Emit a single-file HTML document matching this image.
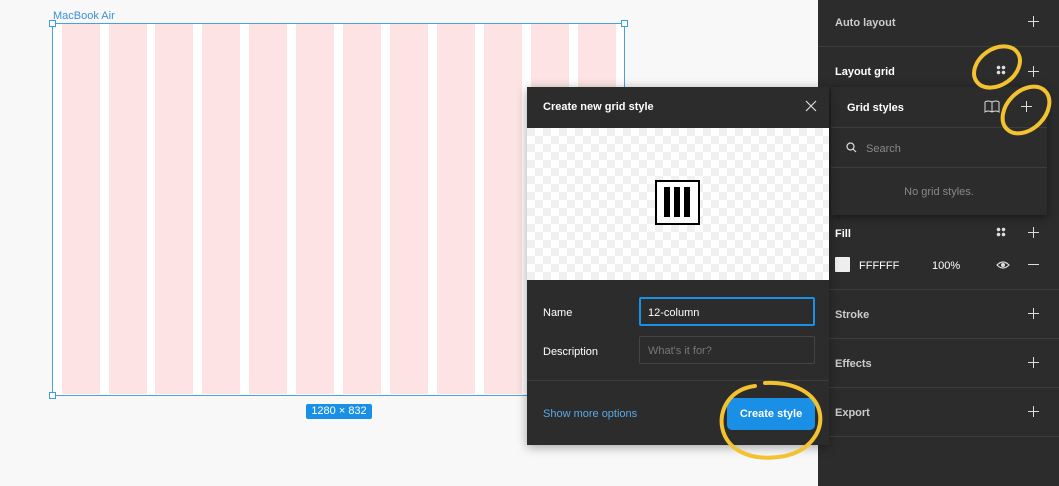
<!DOCTYPE html>
<html><head><meta charset="utf-8"><style>
*{margin:0;padding:0;box-sizing:border-box}
body{width:1059px;height:486px;overflow:hidden;background:#f8f8f8;font-family:"Liberation Sans",sans-serif;position:relative}
.abs{position:absolute}
.col{position:absolute;top:24px;height:370px;width:38px;background:#fde3e3}
.h{position:absolute;width:7px;height:7px;background:#fff;border:1px solid #3a9be6}
.panel{left:818px;top:0;width:241px;height:486px;background:#2c2c2c}
.lbl{position:absolute;left:17px;font-size:11px;font-weight:bold;color:#fff}
.div{position:absolute;left:0;width:241px;height:1px;background:#3d3d3d}
.plus{position:absolute;width:11px;height:11px}
.plus:before{content:"";position:absolute;left:5px;top:0;width:1px;height:11px;background:#ddd}
.plus:after{content:"";position:absolute;top:5px;left:0;height:1px;width:11px;background:#ddd}
.dots{position:absolute;width:10px;height:10px;background:radial-gradient(circle,#ddd 1.6px,transparent 2px) 0 0/5px 5px}
.checker{background-color:#fff;background-image:linear-gradient(45deg,#f0f0f0 25%,transparent 25%,transparent 75%,#f0f0f0 75%),linear-gradient(45deg,#f0f0f0 25%,transparent 25%,transparent 75%,#f0f0f0 75%);background-size:16px 16px;background-position:8px 0,0 8px}
</style></head><body>
<div class="abs" style="left:53px;top:10px;font-size:11px;color:#3a8fd8">MacBook Air</div>
<div class="abs" style="left:52px;top:23px;width:573px;height:373px;background:#fff;border:1px solid #4aa0e6"></div>
<div class="col" style="left:62px"></div><div class="col" style="left:109px"></div><div class="col" style="left:155px"></div><div class="col" style="left:202px"></div><div class="col" style="left:249px"></div><div class="col" style="left:296px"></div><div class="col" style="left:343px"></div><div class="col" style="left:390px"></div><div class="col" style="left:437px"></div><div class="col" style="left:484px"></div><div class="col" style="left:531px"></div><div class="col" style="left:578px"></div>
<div class="h" style="left:49px;top:20px"></div><div class="h" style="left:621px;top:20px"></div><div class="h" style="left:49px;top:392px"></div>
<div class="abs" style="left:306px;top:404px;width:66px;height:15px;background:#1a8fe6;border-radius:2px;color:#fff;font-size:11px;text-align:center;line-height:15px">1280 × 832</div>

<div class="abs panel">
 <div class="lbl" style="top:17px;color:#ccc">Auto layout</div><div class="plus" style="left:210px;top:16px"></div>
 <div class="div" style="top:46px"></div>
 <div class="lbl" style="top:66px">Layout grid</div><div class="dots" style="left:178px;top:65px"></div><div class="plus" style="left:210px;top:66px"></div>
 <div class="lbl" style="top:228px">Fill</div><div class="dots" style="left:178px;top:227px"></div><div class="plus" style="left:210px;top:227px"></div>
 <div class="abs" style="left:17px;top:257px;width:15px;height:15px;background:#eee;border-radius:1px"></div>
 <div class="abs" style="left:41px;top:260px;font-size:11px;color:#fff">FFFFFF</div>
 <div class="abs" style="left:114px;top:260px;font-size:11px;color:#fff">100%</div>
 <svg class="abs" style="left:178px;top:260px" width="14" height="10"><path d="M1 5Q7 -1 13 5Q7 11 1 5Z" fill="none" stroke="#ddd" stroke-width="1.2"/><circle cx="7" cy="5" r="2" fill="#ddd"/></svg>
 <div class="abs" style="left:210px;top:264px;width:11px;height:1px;background:#ddd"></div>
 <div class="div" style="top:289px"></div>
 <div class="lbl" style="top:309px;color:#ccc">Stroke</div><div class="plus" style="left:210px;top:308px"></div>
 <div class="div" style="top:338px"></div>
 <div class="lbl" style="top:358px;color:#ccc">Effects</div><div class="plus" style="left:210px;top:357px"></div>
 <div class="div" style="top:387px"></div>
 <div class="lbl" style="top:407px;color:#ccc">Export</div><div class="plus" style="left:210px;top:406px"></div>
 <div class="div" style="top:436px"></div>
</div>

<div class="abs" style="left:831px;top:87px;width:216px;height:128px;background:#2c2c2c;box-shadow:0 2px 8px rgba(0,0,0,.5)">
 <div class="abs" style="left:16px;top:15px;font-size:11px;font-weight:bold;color:#fff">Grid styles</div>
 <svg class="abs" style="left:153px;top:13px" width="16" height="13"><path d="M1 2Q4 0 8 2Q12 0 15 2V12Q12 10 8 12Q4 10 1 12Z M8 2V12" fill="none" stroke="#ddd" stroke-width="1"/></svg>
 <div class="plus" style="left:190px;top:14px"></div>
 <div class="abs" style="left:0;top:40px;width:216px;height:1px;background:#3d3d3d"></div>
 <svg class="abs" style="left:15px;top:55px" width="11" height="11"><circle cx="4.5" cy="4.5" r="3.5" fill="none" stroke="#ddd" stroke-width="1.2"/><path d="M7 7L10 10" stroke="#ddd" stroke-width="1.2"/></svg>
 <div class="abs" style="left:35px;top:56px;font-size:11px;color:#888">Search</div>
 <div class="abs" style="left:0;top:80px;width:216px;height:1px;background:#3d3d3d"></div>
 <div class="abs" style="left:0;top:99px;width:216px;text-align:center;font-size:11px;color:#888">No grid styles.</div>
</div>

<div class="abs" style="left:527px;top:87px;width:302px;height:358px;background:#2c2c2c;box-shadow:0 2px 10px rgba(0,0,0,.35)">
 <div class="abs" style="left:16px;top:14px;font-size:11px;font-weight:bold;color:#fff">Create new grid style</div>
 <svg class="abs" style="left:278px;top:13px" width="12" height="12"><path d="M1 1L11 11M11 1L1 11" stroke="#ddd" stroke-width="1.2"/></svg>
 <div class="abs checker" style="left:0;top:41px;width:302px;height:152px"></div>
 <div class="abs" style="left:128px;top:93px;width:45px;height:45px;background:#fff;border:2px solid #000"></div>
 <div class="abs" style="left:137px;top:100px;width:6px;height:30px;background:#000"></div>
 <div class="abs" style="left:147px;top:100px;width:6px;height:30px;background:#000"></div>
 <div class="abs" style="left:157px;top:100px;width:6px;height:30px;background:#000"></div>
 <div class="abs" style="left:16px;top:220px;font-size:11px;color:#fff">Name</div>
 <div class="abs" style="left:112px;top:210px;width:176px;height:29px;border:2px solid #1a8fe6;border-radius:2px;color:#fff;font-size:11px;padding:8px 0 0 7px">12-column</div>
 <div class="abs" style="left:16px;top:259px;font-size:11px;color:#fff">Description</div>
 <div class="abs" style="left:112px;top:249px;width:176px;height:28px;border:1px solid #444;border-radius:2px;color:#777;font-size:11px;padding:8px 0 0 8px">What's it for?</div>
 <div class="abs" style="left:0;top:293px;width:302px;height:1px;background:#3d3d3d"></div>
 <div class="abs" style="left:16px;top:321px;font-size:11px;color:#5aa9e6">Show more options</div>
 <div class="abs" style="left:200px;top:311px;width:88px;height:32px;background:#1a8fe6;border-radius:5px;color:#fff;font-size:11px;font-weight:bold;text-align:center;line-height:32px">Create style</div>
</div>

<svg class="abs" style="left:0;top:0" width="1059" height="486">
<g fill="none" stroke="#f2c230" stroke-width="4" stroke-linecap="round">
<ellipse cx="997" cy="67" rx="25" ry="18" transform="rotate(-35 997 67)"/>
<ellipse cx="1026" cy="110" rx="27" ry="19" transform="rotate(-45 1026 110)"/>
<path d="M755 386C705 392 708 470 785 456C835 445 835 380 765 383"/>
</g></svg>
</body></html>
